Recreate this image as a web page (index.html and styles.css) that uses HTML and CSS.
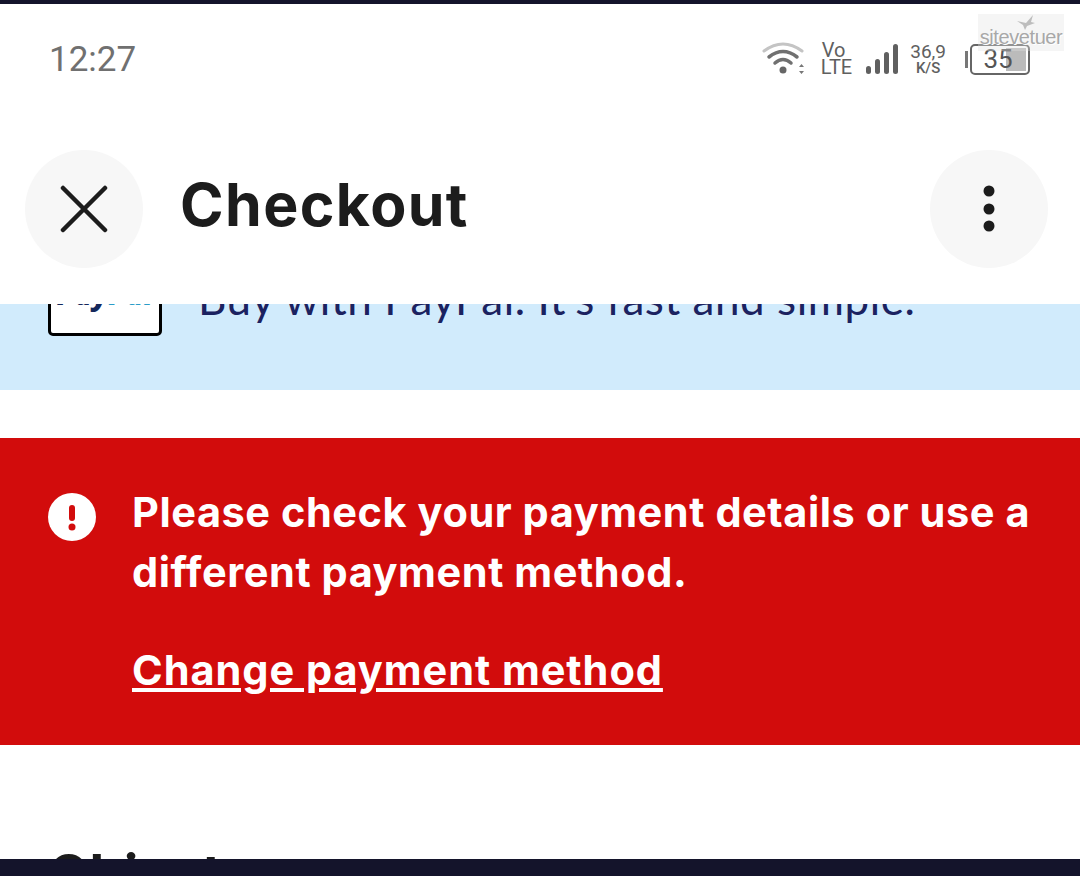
FILE: index.html
```html
<!DOCTYPE html>
<html lang="en">
<head>
  <meta charset="UTF-8">
  <title>Checkout</title>
  <link rel="stylesheet" href="styles.css">
</head>
<body>

<div id="app">
  <div class="status-bar">
    <span class="clock">12:27</span>
    <div class="status-icons">
      <svg class="wifi" width="44" height="36" viewBox="0 0 44 36" fill="none" stroke-linecap="round">
        <path d="M2 11 Q21 -3 40 11" stroke="#c4c4c4" stroke-width="3"/>
        <path d="M7 17 Q21 6 35 17" stroke="#707070" stroke-width="3.5"/>
        <path d="M13 23 Q21 16 29 23" stroke="#707070" stroke-width="3.5"/>
        <circle cx="21" cy="30" r="3.5" fill="#666"/>
        <path d="M37 27 l2.500 -3 l2.500 3 z M37 31 l2.500 3 l2.500 -3 z" fill="#777"/>
      </svg>
      <div class="volte"><span>Vo</span><span>LTE</span></div>
      <svg class="signal" width="32" height="32" viewBox="0 0 32 32" fill="#606060">
        <rect x="0" y="23" width="5" height="8" rx="2.500"/>
        <rect x="9" y="16" width="5" height="15" rx="2.500"/>
        <rect x="18" y="9" width="5" height="22" rx="2.500"/>
        <rect x="27" y="1" width="5" height="30" rx="2.500"/>
      </svg>
      <div class="speed"><span class="speed-num">36,9</span><span class="speed-unit">K/S</span></div>
      <div class="battery">
        <span class="battery-cap"></span>
        <div class="battery-body">
          <span class="battery-fill"></span>
          <span class="battery-num">35</span>
        </div>
      </div>
    </div>
    <div class="watermark">
      <svg width="22" height="16" viewBox="0 0 22 16" fill="#bdbdbd"><path d="M3 7 L12 9 L19 1 L17 8 L21 9 L13 12 L11 16 L9 11 Z"/></svg>
      <span>sitevetuer</span>
    </div>
  </div>

  <header class="top-bar">
    <button class="round-btn" aria-label="Close">
      <svg width="48" height="48" viewBox="0 0 48 48" fill="none" stroke="#1c1c1c" stroke-width="4.500" stroke-linecap="round">
        <path d="M3 3 L45 45 M45 3 L3 45"/>
      </svg>
    </button>
    <h1 class="page-title">Checkout</h1>
    <button class="round-btn" aria-label="More">
      <svg width="12" height="48" viewBox="0 0 12 48" fill="#1c1c1c">
        <circle cx="6" cy="6" r="5.5"/>
        <circle cx="6" cy="24" r="5.5"/>
        <circle cx="6" cy="41" r="5.5"/>
      </svg>
    </button>
  </header>

  <main class="content">
    <section class="paypal-banner">
      <div class="paypal-badge"><span class="pay">Pay</span><span class="pal">Pal</span></div>
      <p class="paypal-text">Buy with PayPal. It's fast and simple.</p>
    </section>

    <section class="error-box">
      <svg class="error-icon" width="48" height="48" viewBox="0 0 48 48">
        <circle cx="24" cy="24" r="24" fill="#fff"/>
        <rect x="21" y="12" width="6" height="16" rx="3" fill="#d20c0c"/>
        <circle cx="24" cy="34" r="3.500" fill="#d20c0c"/>
      </svg>
      <div class="error-body">
        <p class="error-text">Please check your payment details or use a different payment method.</p>
        <a class="error-link" href="#">Change payment method</a>
      </div>
    </section>

    <h2 class="section-title">Objects</h2>
  </main>

  <div class="bottom-bar"></div>
</div>

</body>
</html>
```

FILE: styles.css
```css
* {
  box-sizing: border-box;
}

body {
  margin: 0;
  padding: 0;
  background-color: #fff;
  font-family: Inter, "Liberation Sans", sans-serif;
}

#app {
  display: flex;
  flex-direction: column;
  height: 876px;
  overflow: hidden;
  border-top: 4px solid #14142b;
}

.status-bar {
  position: relative;
  display: flex;
  justify-content: space-between;
  align-items: center;
  height: 110px;
  padding: 0 50px 0 49px;
}

.clock {
  font-family: Roboto, sans-serif;
  font-size: 35px;
  color: #707070;
  margin-top: 1px;
}

.status-icons {
  display: flex;
  align-items: center;
  gap: 14px;
  color: #606060;
  font-family: Roboto, sans-serif;
}

.wifi {
  margin-right: 1px;
  margin-top: -2px;
}

.volte {
  display: flex;
  flex-direction: column;
  font-size: 20px;
  line-height: 17px;
  font-weight: 400;
}

.volte span:first-child {
  padding-left: 1px;
}

.speed {
  display: flex;
  flex-direction: column;
  align-items: center;
  margin-left: -2px;
}

.speed-num {
  font-size: 19px;
  line-height: 19px;
}

.speed-unit {
  font-size: 15px;
  line-height: 15px;
  font-weight: 500;
}

.battery {
  display: flex;
  align-items: center;
  gap: 1px;
  margin-left: 5px;
}

.battery-cap {
  width: 3px;
  height: 17px;
  background-color: #777;
  margin-right: 1px;
}

.battery-body {
  position: relative;
  display: flex;
  justify-content: center;
  align-items: center;
  width: 60px;
  height: 31px;
  border: 2px solid #666;
  border-radius: 5px;
}

.battery-fill {
  position: absolute;
  top: 2px;
  right: 2px;
  bottom: 2px;
  width: 20px;
  background-color: #bbb;
}

.battery-num {
  position: relative;
  font-size: 26px;
  color: #555;
  margin-right: 4px;
}

.watermark {
  position: absolute;
  top: 10px;
  left: 978px;
  width: 86px;
  height: 37px;
  display: flex;
  flex-direction: column;
  align-items: center;
  background-color: rgba(225, 225, 225, 0.35);
  color: #a8a8a8;
  font-family: "Liberation Sans", sans-serif;
  font-size: 20px;
  line-height: 14px;
  letter-spacing: -0.4px;
  text-shadow: 1px 1px 0 #fff;
}

.watermark svg {
  margin-left: 8px;
}

.top-bar {
  display: flex;
  align-items: center;
  height: 190px;
  padding: 0 32px 0 25px;
  background-color: #fff;
}

.round-btn {
  display: flex;
  justify-content: center;
  align-items: center;
  width: 118px;
  height: 118px;
  padding: 0;
  border: none;
  border-radius: 50%;
  background-color: #f7f7f7;
}

.top-bar .round-btn:last-child {
  margin-left: auto;
}

.page-title {
  margin: -9px 0 0 37px;
  font-size: 59px;
  font-weight: 700;
  letter-spacing: 1.4px;
  color: #1c1c1c;
}

.content {
  flex: 1;
  overflow: hidden;
  min-height: 0;
}

.paypal-banner {
  display: flex;
  align-items: flex-end;
  height: 86px;
  padding: 0 0 54px 48px;
  background-color: #d1ebfc;
  overflow: hidden;
}

.paypal-badge {
  flex: none;
  display: flex;
  justify-content: center;
  align-items: flex-end;
  width: 114px;
  height: 80px;
  padding-bottom: 24px;
  border: 3px solid #000;
  border-radius: 5px;
  background-color: #fff;
  font-family: "Open Sans", sans-serif;
  font-size: 29px;
  font-weight: 800;
  font-style: italic;
  line-height: 31px;
}

.pay {
  color: #14285c;
}

.pal {
  color: #2b9cc8;
}

.paypal-text {
  flex: none;
  margin: 0 0 13px 36px;
  font-family: Lato, sans-serif;
  font-size: 44px;
  line-height: 50px;
  color: #1b2260;
  letter-spacing: 0.55px;
}

.error-box {
  display: flex;
  align-items: flex-start;
  gap: 36px;
  height: 307px;
  margin-top: 48px;
  padding: 44px 40px 0 48px;
  background-color: #d20c0c;
  color: #fff;
}

.error-icon {
  flex: none;
  margin-top: 11px;
}

.error-text {
  margin: 0;
  font-size: 41.5px;
  font-weight: 700;
  line-height: 60px;
  letter-spacing: 0.55px;
}

.error-link {
  display: block;
  margin-top: 38px;
  font-size: 41.5px;
  font-weight: 700;
  line-height: 60px;
  letter-spacing: 0.95px;
  color: #fff;
}

.section-title {
  margin: 94px 0 0 48px;
  font-size: 54px;
  font-weight: 700;
  line-height: 70px;
  color: #1c1c1c;
}

.bottom-bar {
  flex: none;
  height: 17px;
  background-color: #14142b;
}
```
